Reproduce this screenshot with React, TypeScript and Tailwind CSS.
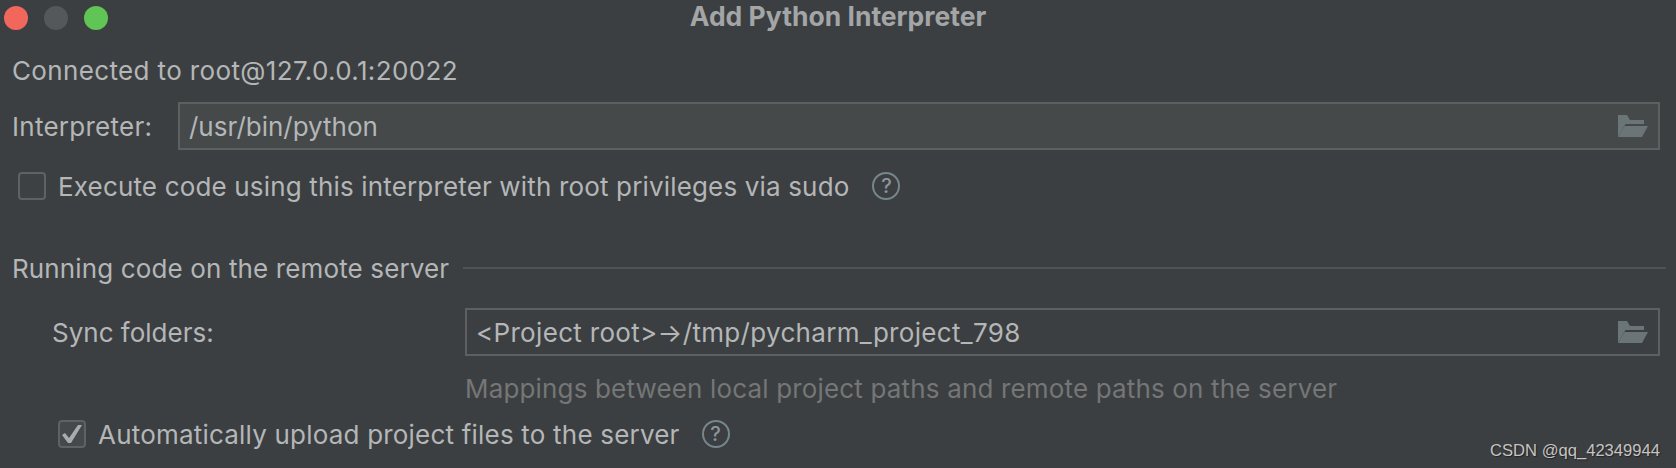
const FolderIcon = () => (
  <svg width="30" height="22" viewBox="0 0 30 22" className="shrink-0">
    <path d="M0 0H9L12 5H26V9H7.5L0 22Z" fill="#6b7476" />
    <path d="M6.5 11H30L24 22H0Z" fill="#6b7476" />
  </svg>
);

const HelpIcon = () => (
  <div className="flex h-7 w-7 shrink-0 items-center justify-center rounded-full border-2 border-[#77858d] text-[20px] font-medium text-[#8b969c]">
    ?
  </div>
);

const PathField = ({ value, className }: { value: string; className: string }) => (
  <div
    className={`flex h-12 flex-1 items-center justify-between border-2 border-[#5d5f60] pl-[9px] pr-[10px] ${className}`}
  >
    <span>{value}</span>
    <FolderIcon />
  </div>
);

export default function App() {
  return (
    <div className="relative flex h-[468px] w-[1676px] flex-col overflow-hidden bg-[#3c3f41] font-['Inter','Noto_Sans',sans-serif] text-[26px] text-[#b4b6b7]">
      {/* title bar */}
      <div className="relative flex h-8 items-center justify-center pt-[1px]">
        <div className="absolute left-1 top-[6px] flex gap-4">
          <div className="h-6 w-6 rounded-full bg-[#f1675c]" />
          <div className="h-6 w-6 rounded-full bg-[#54585b]" />
          <div className="h-6 w-6 rounded-full bg-[#60c554]" />
        </div>
        <span className="text-[26.5px] font-bold text-[#a3a5a6]">Add Python Interpreter</span>
      </div>

      <div className="mt-[16px] flex h-11 items-center pl-3 tracking-[0.36px]">
        Connected to root@127.0.0.1:20022
      </div>

      <div className="mt-[10px] flex items-center pl-3 pr-4">
        <span className="w-[166px] tracking-[0.27px]">Interpreter:</span>
        <PathField value="/usr/bin/python" className="bg-[#45494a]" />
      </div>

      <div className="mt-[22px] flex h-7 items-center pl-[18px]">
        <div className="h-7 w-7 rounded-[4px] border-2 border-[#5f6162] bg-[#3e4143]" />
        <span className="ml-[12px] tracking-[0.16px]">
          Execute code using this interpreter with root privileges via sudo
        </span>
        <div className="ml-[23px]">
          <HelpIcon />
        </div>
      </div>

      <div className="mt-[54px] flex h-7 items-center pl-3 pr-[10px]">
        <span className="tracking-[0.13px]">Running code on the remote server</span>
        <div className="ml-[14px] h-[2px] flex-1 bg-[#505254]" />
      </div>

      <div className="mt-[26px] flex items-center pl-[52px] pr-4">
        <span className="w-[413px]">Sync folders:</span>
        <PathField
          value="<Project root>→/tmp/pycharm_project_798"
          className="bg-[#3c3f41] pl-[8px] tracking-[0.32px]"
        />
      </div>

      <div className="mt-[18px] flex h-7 items-center pl-[465px] tracking-[0.16px] text-[#747677]">
        Mappings between local project paths and remote paths on the server
      </div>

      <div className="mt-[18px] flex h-7 items-center pl-[58px]">
        <div className="flex h-7 w-7 items-center justify-center rounded-[4px] border-2 border-[#5f6162] bg-[#45494b]">
          <svg width="20" height="18" viewBox="0 0 20 18" className="shrink-0">
            <path d="M0 10L3 8L7 13L16 0H20L9 18H6Z" fill="#a9abac" />
          </svg>
        </div>
        <span className="ml-[12px] tracking-[0.2px]">Automatically upload project files to the server</span>
        <div className="ml-[22px]">
          <HelpIcon />
        </div>
      </div>

      <div className="absolute right-4 top-[439px] font-['Liberation_Sans',sans-serif] text-[16.6px] text-[#c4c4c4] [text-shadow:1px_1px_1px_#222]">
        CSDN @qq_42349944
      </div>
    </div>
  );
}
